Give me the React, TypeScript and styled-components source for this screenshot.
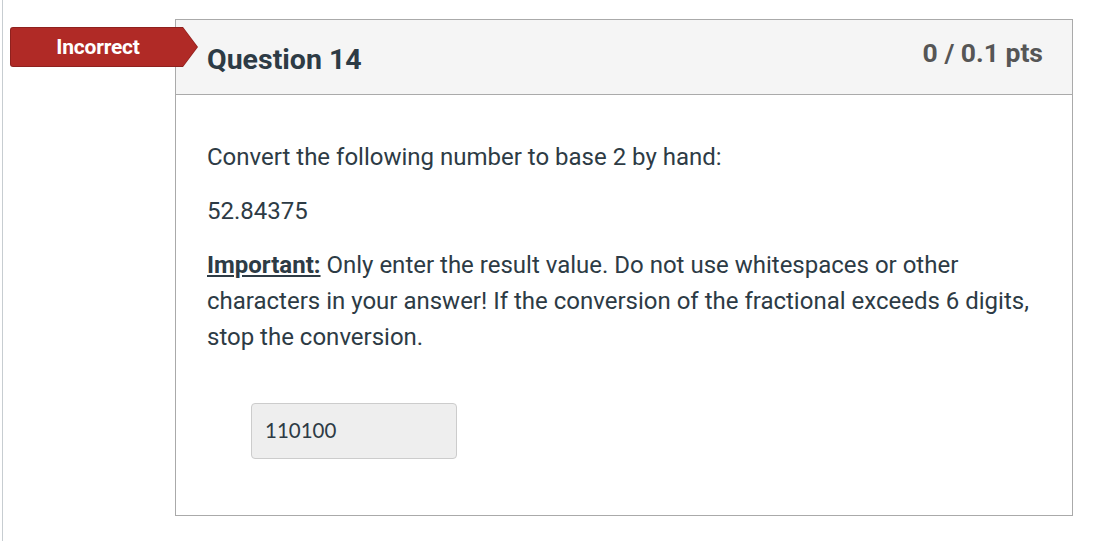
import styled, { createGlobalStyle } from 'styled-components';

const GlobalStyle = createGlobalStyle`
  html, body {
    margin: 0;
    padding: 0;
    background: #fff;
  }
  body {
    font-family: 'Roboto', 'Liberation Sans', sans-serif;
    color: #2d3b45;
  }
`;

const Page = styled.div`
  display: flex;
  min-height: 541px;
  box-sizing: border-box;
  padding-left: 2px;
`;

const Rule = styled.div`
  width: 1px;
  background: #c7cdd1;
  flex-shrink: 0;
`;

const Main = styled.div`
  flex: 1;
  padding: 19px 20px 0 172px;
`;

const Card = styled.div`
  position: relative;
  border: 1px solid #aaaaaa;
  width: 898px;
  box-sizing: border-box;
`;

const Badge = styled.div`
  position: absolute;
  left: -166px;
  top: 7px;
  width: 188px;
  height: 40px;
  background: #8f211e;
  clip-path: polygon(0 0, 173px 0, 188px 20px, 173px 40px, 0 40px);
  border-radius: 3px 0 0 3px;
  display: flex;
`;

const BadgeInner = styled.div`
  margin: 1px;
  flex: 1;
  background: #b02a26;
  clip-path: polygon(0 0, 172px 0, 186px 19px, 172px 38px, 0 38px);
  border-radius: 2px 0 0 2px;
  display: flex;
  align-items: center;
  padding-bottom: 0;
  box-sizing: border-box;
`;

const BadgeText = styled.span`
  width: 174px;
  text-align: center;
  color: #fff;
  font-weight: 700;
  font-size: 21px;
  letter-spacing: -0.2px;
`;

const Header = styled.div`
  display: flex;
  justify-content: space-between;
  align-items: flex-start;
  height: 74px;
  background: #f5f5f5;
  border-bottom: 1px solid #aaaaaa;
  padding: 0 29px 0 31px;
`;

const Title = styled.h2`
  margin: 23px 0 0;
  font-size: 28.5px;
  line-height: 34px;
  font-weight: 700;
  color: #2d3b45;
`;

const Points = styled.div`
  margin-top: 18px;
  font-size: 26.5px;
  line-height: 30px;
  font-weight: 700;
  color: #565656;
`;

const Body = styled.div`
  padding: 44px 31px 0;
  height: 420px;
  box-sizing: border-box;
`;

const Para = styled.p`
  margin: 0 0 18px;
  font-size: 24px;
  line-height: 36px;
  color: #2d3b45;
`;

const Strong = styled.strong`
  font-weight: 700;
  text-decoration: underline;
`;

const AnswerRow = styled.div`
  padding: 30px 0 0 44px;
`;

const AnswerBox = styled.div`
  width: 206px;
  height: 56px;
  box-sizing: border-box;
  background: #eeeeee;
  border: 1px solid #cccccc;
  border-radius: 4px;
  display: flex;
  align-items: center;
  padding: 0 13px 2px;
  font-family: 'Lato', 'Liberation Sans', sans-serif;
  font-size: 20.5px;
  color: #2d3b45;
`;

export default function App() {
  return (
    <>
      <GlobalStyle />
      <Page>
        <Rule />
        <Main>
          <Card>
            <Badge>
              <BadgeInner>
                <BadgeText>Incorrect</BadgeText>
              </BadgeInner>
            </Badge>
            <Header>
              <Title>Question 14</Title>
              <Points>0 / 0.1 pts</Points>
            </Header>
            <Body>
              <Para>Convert the following number to base 2 by hand:</Para>
              <Para>52.84375</Para>
              <Para>
                <Strong>Important:</Strong> Only enter the result value. Do not use whitespaces or other
                characters in your answer! If the conversion of the fractional exceeds 6 digits, stop
                the conversion.
              </Para>
              <AnswerRow>
                <AnswerBox>110100</AnswerBox>
              </AnswerRow>
            </Body>
          </Card>
        </Main>
      </Page>
    </>
  );
}
